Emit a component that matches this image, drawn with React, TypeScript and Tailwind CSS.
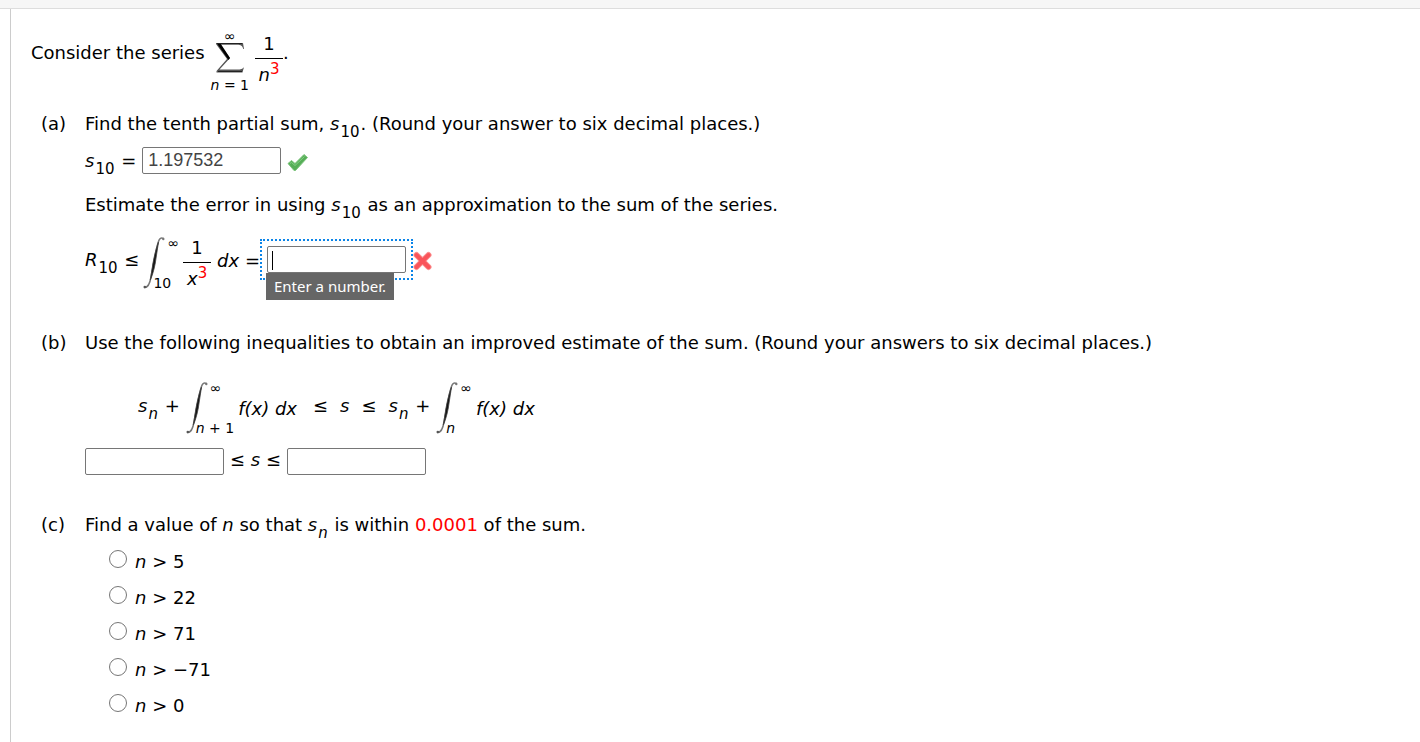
import { useState } from 'react';
import type { ReactNode } from 'react';

const CHOICES = ['5', '22', '71', '−71', '0'];

function Sub({ children }: { children: ReactNode }) {
  return <sub className="bottom-0 mx-px align-[-7px] text-[15px]">{children}</sub>;
}

function Sigma() {
  return (
    <svg width="28" height="30" viewBox="0 0 28 30" aria-hidden="true">
      <path d="M0 0H27L28 6H27.300C26.500 3 25 1.800 21 1.800H4.500L14 15L3.500 26.500H21C25 26.500 26.500 26 28 24L26.500 29.500H0.500V28L11 16L0 1Z" fill="#555" />
      <path d="M1 0.500H4.500L14 15L12.500 17Z" fill="#000" />
      <path d="M1 0.500H26M2 28.500H26" fill="none" stroke="#222" />
    </svg>
  );
}

function Integral({ upper, lower }: { upper: ReactNode; lower: ReactNode }) {
  return (
    <span className="flex h-13">
      <svg width="22" height="52" viewBox="0 0 22 52" aria-hidden="true">
        <path
          d="M20.500 1.500C18 0 16.500 1.500 15.500 4.500C14 9 12.500 16 11 24L8 40C7 46 5 51 1 50.500"
          fill="none"
          stroke="#777"
          strokeWidth="1.500"
        />
        <path d="M15.500 5C13.500 10 11.500 18 10 26L7.300 43C9.500 38 11 33 12.300 26Z" fill="#111" stroke="#444" strokeWidth="0.800" />
        <circle cx="20.300" cy="2" r="1.200" fill="#777" />
        <circle cx="1.800" cy="50" r="1.300" fill="#555" />
      </svg>
      <span className="-ml-3 flex flex-col justify-between text-sm">
        <span className="pl-3.5 leading-3">{upper}</span>
        <span className="leading-3">{lower}</span>
      </span>
    </span>
  );
}

function Fraction({ base }: { base: string }) {
  return (
    <span className="flex w-7 flex-col text-center">
      <span className="h-[26px] border-b border-black leading-[22px]">1</span>
      <span className="leading-8">
        <i>{base}</i>
        <sup className="top-0 align-[7px] text-[15px] text-[#f00]">3</sup>
      </span>
    </span>
  );
}

function Part({ label, children }: { label: string; children: ReactNode }) {
  return (
    <section className="flex pl-2.5">
      <span className="w-11 shrink-0">({label})</span>
      <div className="flex-1">{children}</div>
    </section>
  );
}

const boxClass =
  'block h-[27px] w-[139px] rounded-xs border border-[#767676] bg-white px-[5px] font-["Liberation_Sans",sans-serif] text-lg leading-6 text-[#444] outline-none';

export default function App() {
  const [s10, setS10] = useState('1.197532');
  const [error, setError] = useState('');
  const [low, setLow] = useState('');
  const [high, setHigh] = useState('');
  const [choice, setChoice] = useState('');

  return (
    <div className="bg-white font-['DejaVu_Sans',Verdana,sans-serif] text-lg leading-6 text-black">
      <div className="h-[9px] border-b border-[#ddd] bg-[#f6f6f6]" />
      <main className="ml-2.5 min-h-[calc(100vh-9px)] border-l border-[#ccc] pt-5 pl-5">
        <div className="flex h-[83px] items-start">
          <span className="pt-3">Consider the series</span>
          <span className="ml-1.5 flex flex-col items-center text-sm">
            <span className="h-3.5 leading-3.5">∞</span>
            <Sigma />
            <i className="leading-6">
              n <span className="not-italic">= 1</span>
            </i>
          </span>
          <span className="ml-1.5 pt-1">
            <Fraction base="n" />
          </span>
          <span className="pt-3">.</span>
        </div>

        <Part label="a">
          <p className="h-[35px]">
            Find the tenth partial sum, <i>s</i>
            <Sub>10</Sub>. (Round your answer to six decimal places.)
          </p>
          <div className="flex h-[46px] items-start">
            <label htmlFor="s10" className="pt-0.5">
              <i>s</i>
              <Sub>10</Sub> =
            </label>
            <input id="s10" value={s10} onChange={e => setS10(e.target.value)} className={`ml-1.5 ${boxClass}`} />
            <svg className="mt-1.5 ml-1.5" width="22" height="20" viewBox="0 0 22 20" role="img" aria-label="Correct">
              <path
                d="M1 10.500L4.500 7.500L8 10.500L17 1.500L20.500 4.500L8.500 17.500H7Z"
                fill="#56ae57"
                stroke="#7cc47c"
                strokeLinejoin="round"
              />
              <path d="M3 10.500L4.500 9.500L8 12.500L17.500 3.500" fill="none" stroke="#83cf83" />
            </svg>
          </div>
          <p className="h-11">
            Estimate the error in using <i>s</i>
            <Sub>10</Sub> as an approximation to the sum of the series.
          </p>
          <div className="flex h-[94px] items-start">
            <span className="pt-[11px]">
              <i>R</i>
              <Sub>10</Sub> ≤
            </span>
            <span className="ml-1">
              <Integral upper="∞" lower="10" />
            </span>
            <span className="ml-1">
              <Fraction base="x" />
            </span>
            <label htmlFor="error" className="ml-1.5 pt-3">
              <i>dx</i> =
            </label>
            <span className="relative mt-0.5 border-2 border-dotted border-[#0a84e8] p-[5px]">
              <input
                id="error"
                value={error}
                onChange={e => setError(e.target.value)}
                aria-describedby="error-tip"
                className={boxClass}
              />
              <span className="absolute top-2.5 left-2.5 h-[19px] w-px bg-black" />
              <span
                id="error-tip"
                role="tooltip"
                className="absolute top-8 left-1 h-[27px] w-32 bg-[#666] text-center font-['Noto_Sans',sans-serif] text-[15px] leading-[27px] text-white"
              >
                Enter a number.
              </span>
            </span>
            <svg className="mt-3.5" width="20" height="20" viewBox="0 0 20 20" role="img" aria-label="Incorrect">
              <path d="M3.500 4L15.500 16M15.500 4L3.500 16" fill="none" stroke="#fb8f8f" strokeWidth="6" strokeLinecap="round" />
              <path d="M3.500 4L15.500 16M15.500 4L3.500 16" fill="none" stroke="#f9545a" strokeWidth="4" strokeLinecap="round" />
            </svg>
          </div>
        </Part>

        <Part label="b">
          <p className="h-[51px]">
            Use the following inequalities to obtain an improved estimate of the sum. (Round your answers to six decimal
            places.)
          </p>
          <div className="flex h-[66px] items-start pl-[53px]">
            <span className="pt-3">
              <i>s</i>
              <Sub>
                <i>n</i>
              </Sub>{' '}
              +
            </span>
            <span className="ml-1.5">
              <Integral
                upper="∞"
                lower={
                  <>
                    <i>n</i> + 1
                  </>
                }
              />
            </span>
            <i className="ml-1 pt-[15px]">f(x) dx</i>
            <span className="ml-4 flex gap-3 pt-3">
              <span>≤</span>
              <i>s</i>
              <span>≤</span>
              <span>
                <i>s</i>
                <Sub>
                  <i>n</i>
                </Sub>{' '}
                +
              </span>
            </span>
            <span className="ml-1.5">
              <Integral upper="∞" lower={<i>n</i>} />
            </span>
            <i className="ml-1 pt-[15px]">f(x) dx</i>
          </div>
          <div className="flex h-[65px] items-start">
            <input aria-label="Lower bound" value={low} onChange={e => setLow(e.target.value)} className={boxClass} />
            <span className="mx-1.5">
              ≤ <i>s</i> ≤
            </span>
            <input aria-label="Upper bound" value={high} onChange={e => setHigh(e.target.value)} className={boxClass} />
          </div>
        </Part>

        <Part label="c">
          <p className="h-[37px]">
            Find a value of <i>n</i> so that <i>s</i>
            <Sub>
              <i>n</i>
            </Sub>{' '}
            is within <span className="text-[#f00]">0.0001</span> of the sum.
          </p>
          <div className="flex flex-col gap-3 pl-6" role="radiogroup" aria-label="Value of n">
            {CHOICES.map(value => (
              <label key={value} className="flex items-start gap-2">
                <input
                  type="radio"
                  name="choice"
                  checked={choice === value}
                  onChange={() => setChoice(value)}
                  className="size-[18px] appearance-none rounded-full border border-[#767676] checked:border-[5px]"
                />
                <span>
                  <i>n</i> &gt; {value}
                </span>
              </label>
            ))}
          </div>
        </Part>
      </main>
    </div>
  );
}
